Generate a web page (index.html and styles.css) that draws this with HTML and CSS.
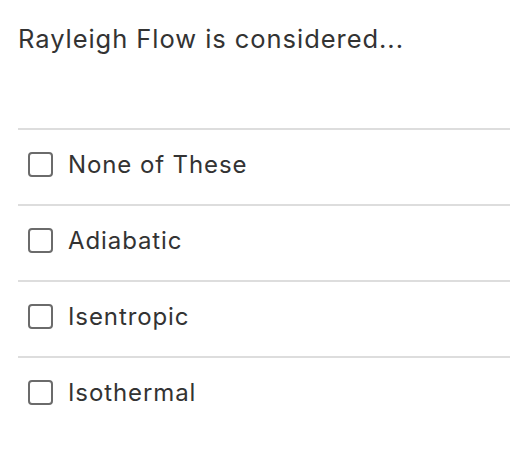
FILE: index.html
```html
<!DOCTYPE html>
<html>
<head>
<meta charset="utf-8">
<link rel="stylesheet" href="styles.css">
</head>
<body>
<div class="question">
  <div class="prompt">Rayleigh Flow is considered...</div>
  <ul class="options">
    <li class="option"><span class="box"></span><span class="label">None of These</span></li>
    <li class="option"><span class="box"></span><span class="label">Adiabatic</span></li>
    <li class="option"><span class="box"></span><span class="label">Isentropic</span></li>
    <li class="option"><span class="box"></span><span class="label">Isothermal</span></li>
  </ul>
</div>
</body>
</html>
```
FILE: styles.css
```css
html, body {
  margin: 0;
  padding: 0;
  background: #fff;
}
.question {
  padding: 24px 0 0 18px;
  font-family: "Inter", "Liberation Sans", sans-serif;
  color: #333;
  letter-spacing: 0.9px;
}
.prompt {
  font-size: 25.5px;
  letter-spacing: 0.95px;
  line-height: 29px;
  height: 104px;
  white-space: nowrap;
}
.options {
  list-style: none;
  margin: 0;
  padding: 0;
}
.option {
  display: flex;
  align-items: center;
  gap: 15px;
  border-top: 2px solid #ddd;
  padding: 22px 0 27px 10px;
  height: 25px;
}
.box {
  box-sizing: border-box;
  width: 25px;
  height: 25px;
  border: 2px solid #6b6b6b;
  border-radius: 4px;
  flex: none;
}
.label {
  font-size: 24px;
  line-height: 29px;
}
```
